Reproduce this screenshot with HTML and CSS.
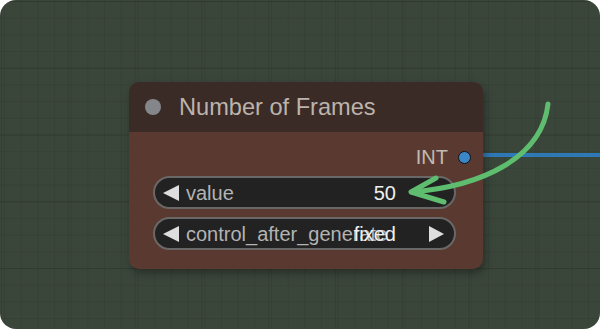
FILE: index.html
```html
<!DOCTYPE html>
<html lang="en">
<head>
    <meta charset="UTF-8">
    <meta name="viewport" content="width=device-width, initial-scale=1.0">
    <title>Number of Frames</title>
    <link rel="stylesheet" href="styles.css">
</head>
<body>

    <div class="canvas">
        <svg class="link" width="600" height="329" viewBox="0 0 600 329">
            <line x1="465" y1="155" x2="600" y2="155" stroke="#2f78b6" stroke-width="4"/>
        </svg>

        <div class="node">
            <div class="node-header">
                <span class="node-dot"></span>
                <span class="node-title">Number of Frames</span>
            </div>
            <div class="node-body">
                <div class="output">
                    <span class="output-label">INT</span>
                    <span class="output-slot"></span>
                </div>
                <div class="widget">
                    <span class="arrow-left"></span>
                    <div class="widget-text">
                        <span class="widget-label">value</span>
                        <span class="widget-value">50</span>
                    </div>
                </div>
                <div class="widget">
                    <span class="arrow-left"></span>
                    <div class="widget-text">
                        <span class="widget-label">control_after_generate</span>
                        <span class="widget-value">fixed</span>
                    </div>
                    <span class="arrow-right"></span>
                </div>
            </div>
        </div>

        <svg class="pointer" width="600" height="329" viewBox="0 0 600 329">
            <g fill="none" stroke="#5fbd6f" stroke-width="5" stroke-linecap="round" stroke-linejoin="round">
                <path d="M548 104 C 542 158, 482 186, 412 192"/>
                <path d="M436 178 L411 192 L444 202"/>
            </g>
        </svg>
    </div>

</body>
</html>
```

FILE: styles.css
```css
body {
    margin: 0;
    background: #ffffff;
    font-family: 'Liberation Sans', Arial, sans-serif;
}

.canvas {
    position: relative;
    width: 600px;
    height: 329px;
    border-radius: 16px;
    overflow: hidden;
    background-color: #3b463b;
    background-image:
        linear-gradient(90deg, rgba(0, 0, 0, 0.08) 1px, transparent 1px),
        linear-gradient(rgba(0, 0, 0, 0.08) 1px, transparent 1px),
        linear-gradient(90deg, rgba(0, 0, 0, 0.1) 1px, transparent 1px),
        linear-gradient(rgba(0, 0, 0, 0.1) 1px, transparent 1px);
    background-size: 16.7px 16.7px, 16.7px 16.7px, 66.8px 66.8px, 66.8px 66.8px;
    background-position: 4px 1px, 4px 1px, 1px 1px, 1px 1px;
}

.link,
.pointer {
    position: absolute;
    left: 0;
    top: 0;
}

.pointer {
    pointer-events: none;
}

/* node sits on the free canvas */
.node {
    position: absolute;
    left: 129px;
    top: 82px;
    width: 354px;
    height: 187px;
    border-radius: 10px;
    overflow: hidden;
    background: #5a3a30;
    box-shadow: 2px 4px 8px rgba(0, 0, 0, 0.35);
    display: flex;
    flex-direction: column;
}

.node-header {
    height: 50px;
    background: #3a2b26;
    display: flex;
    align-items: center;
    padding-left: 16px;
    gap: 18px;
}

.node-dot {
    width: 16px;
    height: 16px;
    border-radius: 50%;
    background: #85868a;
}

.node-title {
    color: #bcb4ac;
    font-size: 23.6px;
    margin-top: 1px;
}

.node-body {
    padding: 13px 27px 0 24px;
    display: flex;
    flex-direction: column;
}

.output {
    height: 24px;
    display: flex;
    align-items: center;
    justify-content: flex-end;
    gap: 10px;
    margin-right: -15px;
    margin-bottom: 7px;
}

.output-label {
    color: #c2bab2;
    font-size: 20px;
}

.output-slot {
    width: 11px;
    height: 11px;
    border-radius: 50%;
    background: #3b86c6;
    border: 1.5px solid #111;
}

.widget {
    height: 29px;
    border: 2px solid #6a6866;
    border-radius: 17px;
    background: #222222;
    display: flex;
    align-items: center;
    padding: 0 10px 0 8px;
    margin-bottom: 8px;
}

.arrow-left {
    width: 0;
    height: 0;
    border-top: 8px solid transparent;
    border-bottom: 8px solid transparent;
    border-right: 16px solid #dedede;
    margin-right: 7px;
}

.arrow-right {
    width: 0;
    height: 0;
    border-top: 8px solid transparent;
    border-bottom: 8px solid transparent;
    border-left: 15px solid #dedede;
    margin-left: 33px;
}

.widget-text {
    flex: 1;
    display: grid;
    font-size: 20px;
    line-height: 24px;
}

.widget-text > span {
    grid-area: 1 / 1;
    white-space: nowrap;
}

.widget-label {
    color: #b3b3b3;
    justify-self: start;
}

.widget-value {
    color: #f0f0f0;
    justify-self: end;
    margin-right: 48px;
}

.widget:last-child .widget-value {
    margin-right: 0;
}
```
